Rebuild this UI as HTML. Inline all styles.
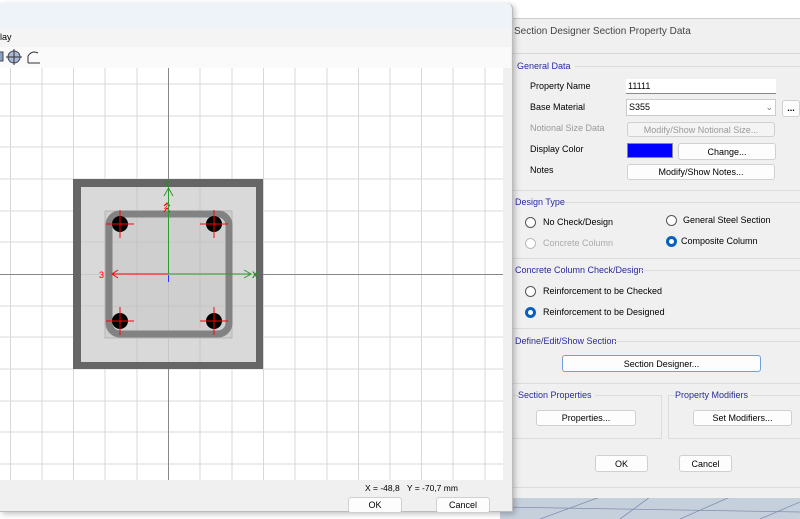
<html><head><style>
body{margin:0;width:800px;height:519px;overflow:hidden;background:#fff;font-family:"Liberation Sans",sans-serif;font-size:9px;color:#000;position:relative}
.a{position:absolute}
.btn{position:absolute;background:#fdfdfd;border:1px solid #d0d0d0;border-radius:3px;text-align:center;font-size:9px;line-height:15px;box-sizing:border-box}
.lbl{position:absolute;font-size:9px}
.grp{position:absolute;color:#2a2aa0;font-size:9px}
.hl{position:absolute;height:1px;background:#dcdcdc}
.rad{position:absolute;width:9px;height:9px;border:1px solid #555;border-radius:50%;background:#fff}
.sel{border:3px solid #0a5fbf;width:5px;height:5px}
</style></head><body>
<!-- background right area -->
<div class="a" style="left:512px;top:0;width:288px;height:18px;background:#fff"></div>
<div class="a" style="left:500px;top:497px;width:300px;height:22px;background:#c6cfdc"></div>
<svg class="a" style="left:500px;top:497px" width="300" height="22"><g stroke="#8090b0" stroke-width="0.8"><line x1="40" y1="22" x2="100" y2="0"/><line x1="120" y1="22" x2="150" y2="0"/><line x1="180" y1="22" x2="230" y2="0"/><line x1="260" y1="22" x2="300" y2="5"/><line x1="0" y1="10" x2="300" y2="15"/></g></svg>
<!-- right dialog -->
<div class="a" style="left:505px;top:18px;width:295px;height:479px;background:#f0f0f0;border-top:1px solid #ccc"></div>
<div class="lbl" style="left:514px;top:26px;font-size:10px;color:#444">Section Designer Section Property Data</div>
<div class="hl" style="left:512px;top:53px;width:288px;background:#d8d8d8"></div>
<div class="grp" style="left:517px;top:61px">General Data</div>
<div class="hl" style="left:575px;top:66px;width:225px"></div>
<div class="lbl" style="left:530px;top:81px">Property Name</div>
<div class="a" style="left:626px;top:79px;width:150px;height:15px;background:#fff;border-bottom:1px solid #888;box-sizing:border-box;padding:2px 2px;font-size:9px">11111</div>
<div class="lbl" style="left:530px;top:102px">Base Material</div>
<div class="a" style="left:626px;top:99px;width:150px;height:17px;background:#fff;border:1px solid #ccc;box-sizing:border-box;padding:2px 2px;font-size:9px">S355<span style="float:right;color:#777">&#8964;</span></div>
<div class="btn" style="left:782px;top:100px;width:18px;height:17px;font-weight:bold">...</div>
<div class="lbl" style="left:530px;top:123px;color:#999">Notional Size Data</div>
<div class="btn" style="left:627px;top:122px;width:148px;height:15px;color:#999;background:#f4f4f4">Modify/Show Notional Size...</div>
<div class="lbl" style="left:530px;top:144px">Display Color</div>
<div class="a" style="left:627px;top:143px;width:44px;height:13px;background:#0000ff;border:1px solid #888"></div>
<div class="btn" style="left:678px;top:143px;width:98px;height:17px;line-height:16px">Change...</div>
<div class="lbl" style="left:530px;top:165px">Notes</div>
<div class="btn" style="left:627px;top:164px;width:148px;height:16px">Modify/Show Notes...</div>
<div class="hl" style="left:512px;top:190px;width:288px"></div>
<div class="grp" style="left:515px;top:197px">Design Type</div>
<div class="hl" style="left:565px;top:202px;width:235px"></div>
<div class="rad" style="left:525px;top:217px"></div><div class="lbl" style="left:543px;top:217px">No Check/Design</div>
<div class="rad" style="left:666px;top:215px"></div><div class="lbl" style="left:683px;top:215px">General Steel Section</div>
<div class="rad" style="left:525px;top:238px;border-color:#bbb"></div><div class="lbl" style="left:543px;top:238px;color:#aaa">Concrete Column</div>
<div class="rad sel" style="left:666px;top:236px"></div><div class="lbl" style="left:681px;top:236px">Composite Column</div>
<div class="hl" style="left:512px;top:258px;width:288px"></div>
<div class="grp" style="left:515px;top:265px">Concrete Column Check/Design</div>
<div class="hl" style="left:640px;top:270px;width:160px"></div>
<div class="rad" style="left:525px;top:286px"></div><div class="lbl" style="left:543px;top:286px">Reinforcement to be Checked</div>
<div class="rad sel" style="left:525px;top:307px"></div><div class="lbl" style="left:543px;top:307px">Reinforcement to be Designed</div>
<div class="hl" style="left:512px;top:328px;width:288px"></div>
<div class="grp" style="left:515px;top:336px">Define/Edit/Show Section</div>
<div class="hl" style="left:615px;top:341px;width:185px"></div>
<div class="btn" style="left:562px;top:355px;width:199px;height:17px;border-color:#6fa0d8;line-height:16px">Section Designer...</div>
<div class="hl" style="left:512px;top:383px;width:288px"></div>
<div class="a" style="left:513px;top:395px;width:148px;height:42px;border:1px solid #dcdcdc;border-left:none"></div>
<div class="a" style="left:668px;top:395px;width:132px;height:42px;border:1px solid #dcdcdc;border-right:none"></div>
<div class="grp" style="left:518px;top:390px;background:#f0f0f0;padding-right:3px">Section Properties</div>
<div class="grp" style="left:675px;top:390px;background:#f0f0f0;padding-right:3px">Property Modifiers</div>
<div class="btn" style="left:536px;top:410px;width:100px;height:16px">Properties...</div>
<div class="btn" style="left:693px;top:410px;width:99px;height:16px">Set Modifiers...</div>
<div class="btn" style="left:595px;top:455px;width:53px;height:17px;line-height:16px">OK</div>
<div class="btn" style="left:679px;top:455px;width:53px;height:17px;line-height:16px">Cancel</div>
<div class="hl" style="left:512px;top:487px;width:288px"></div>
<!-- left window -->
<div class="a" style="left:0;top:3px;width:512px;height:508px;background:#f0f0f0;border-right:1px solid #bbb;border-bottom:1px solid #bbb;border-radius:0 6px 0 0;box-shadow:2px 2px 6px rgba(0,0,0,.25)"></div>
<div class="a" style="left:0;top:3px;width:511px;height:24px;background:#eef3fa;border-radius:0 6px 0 0"></div>
<div class="a" style="left:0;top:27px;width:511px;height:20px;background:#f4f4f4"></div>
<div class="lbl" style="left:0;top:32px">lay</div>
<div class="a" style="left:0;top:47px;width:511px;height:21px;background:#fafafa"></div>
<svg class="a" style="left:0;top:49px" width="45" height="16"><rect x="-3" y="3" width="6" height="9" fill="#8da2c0" stroke="#445"/><circle cx="14" cy="8" r="6" fill="#a8bad5" stroke="#445"/><line x1="6" y1="8" x2="22" y2="8" stroke="#333"/><line x1="14" y1="0" x2="14" y2="16" stroke="#333"/><path d="M28 14 L28 7 Q32 1 38 4 M28 14 L40 14" fill="none" stroke="#333"/></svg>
<svg class="a" style="left:0;top:68px" width="503" height="412">
<rect width="503" height="412" fill="#fff"/>
<g stroke="#d8d8d8" stroke-width="1">
<line x1="10.5" y1="0" x2="10.5" y2="412"/><line x1="42" y1="0" x2="42" y2="412"/><line x1="73.5" y1="0" x2="73.5" y2="412"/><line x1="105" y1="0" x2="105" y2="412"/><line x1="137" y1="0" x2="137" y2="412"/><line x1="200" y1="0" x2="200" y2="412"/><line x1="232" y1="0" x2="232" y2="412"/><line x1="263.5" y1="0" x2="263.5" y2="412"/><line x1="295" y1="0" x2="295" y2="412"/><line x1="327" y1="0" x2="327" y2="412"/><line x1="358.5" y1="0" x2="358.5" y2="412"/><line x1="390" y1="0" x2="390" y2="412"/><line x1="421.5" y1="0" x2="421.5" y2="412"/><line x1="453" y1="0" x2="453" y2="412"/><line x1="485" y1="0" x2="485" y2="412"/>
<line y1="16" x1="0" y2="16" x2="503"/><line y1="48" x1="0" y2="48" x2="503"/><line y1="79" x1="0" y2="79" x2="503"/><line y1="111" x1="0" y2="111" x2="503"/><line y1="143" x1="0" y2="143" x2="503"/><line y1="174" x1="0" y2="174" x2="503"/><line y1="238" x1="0" y2="238" x2="503"/><line y1="269" x1="0" y2="269" x2="503"/><line y1="301" x1="0" y2="301" x2="503"/><line y1="333" x1="0" y2="333" x2="503"/><line y1="364" x1="0" y2="364" x2="503"/><line y1="396" x1="0" y2="396" x2="503"/>
</g>
<g stroke="#888"><line x1="168.5" y1="0" x2="168.5" y2="412"/><line x1="0" y1="206.5" x2="503" y2="206.5"/></g>
<rect x="73" y="111" width="190" height="190" fill="#666"/>
<rect x="81" y="119" width="175" height="175" fill="#d9d9d9"/>
<rect x="105" y="143" width="127" height="127" fill="#cfcfcf" stroke="#aaa" stroke-width="0.7"/>
<g stroke="#bbb" stroke-width="0.6"><line x1="137" y1="119" x2="137" y2="294"/><line x1="200" y1="119" x2="200" y2="294"/><line x1="81" y1="174" x2="256" y2="174"/><line x1="81" y1="238" x2="256" y2="238"/><line x1="168.5" y1="119" x2="168.5" y2="294"/><line x1="81" y1="206.5" x2="256" y2="206.5"/></g>
<rect x="109" y="146" width="120" height="120" rx="11" fill="none" stroke="#828282" stroke-width="7"/>
<g fill="#000"><circle cx="120" cy="156" r="8"/><circle cx="214" cy="156" r="8"/><circle cx="120" cy="253" r="8"/><circle cx="214" cy="253" r="8"/></g>
<g stroke="#f00" stroke-width="1"><line x1="106" y1="156" x2="134" y2="156"/><line x1="120" y1="142" x2="120" y2="170"/><line x1="200" y1="156" x2="228" y2="156"/><line x1="214" y1="142" x2="214" y2="170"/><line x1="106" y1="253" x2="134" y2="253"/><line x1="120" y1="239" x2="120" y2="267"/><line x1="200" y1="253" x2="228" y2="253"/><line x1="214" y1="239" x2="214" y2="267"/>
<line x1="112" y1="206" x2="168" y2="206"/><path d="M118 202 L112 206 L118 210 M164 138 L167 135 L170 138 M164 144 L167 140 L170 144" fill="none"/></g>
<text x="99" y="210" fill="#f00" font-size="9">3</text>
<text x="164" y="141" fill="#f00" font-size="7">2</text>
<g stroke="#2a9a2a" fill="none"><line x1="168.5" y1="206" x2="168.5" y2="118"/><line x1="168.5" y1="206" x2="250" y2="206"/><path d="M164 128 L168.5 120 L173 128 M244 202 L251 206 L244 210"/></g>
<text x="164" y="119" fill="#2a8a2a" font-size="9" font-weight="bold">Y</text>
<text x="252" y="210" fill="#2a8a2a" font-size="9" font-weight="bold">X</text>
<line x1="168.5" y1="207" x2="168.5" y2="214" stroke="#33f"/>
</svg>
<div class="lbl" style="left:365px;top:483px;font-size:8.5px">X = -48,8&nbsp;&nbsp;&nbsp;Y = -70,7 mm</div>
<div class="btn" style="left:348px;top:497px;width:54px;height:16px">OK</div>
<div class="btn" style="left:436px;top:497px;width:54px;height:16px">Cancel</div>
</body></html>
